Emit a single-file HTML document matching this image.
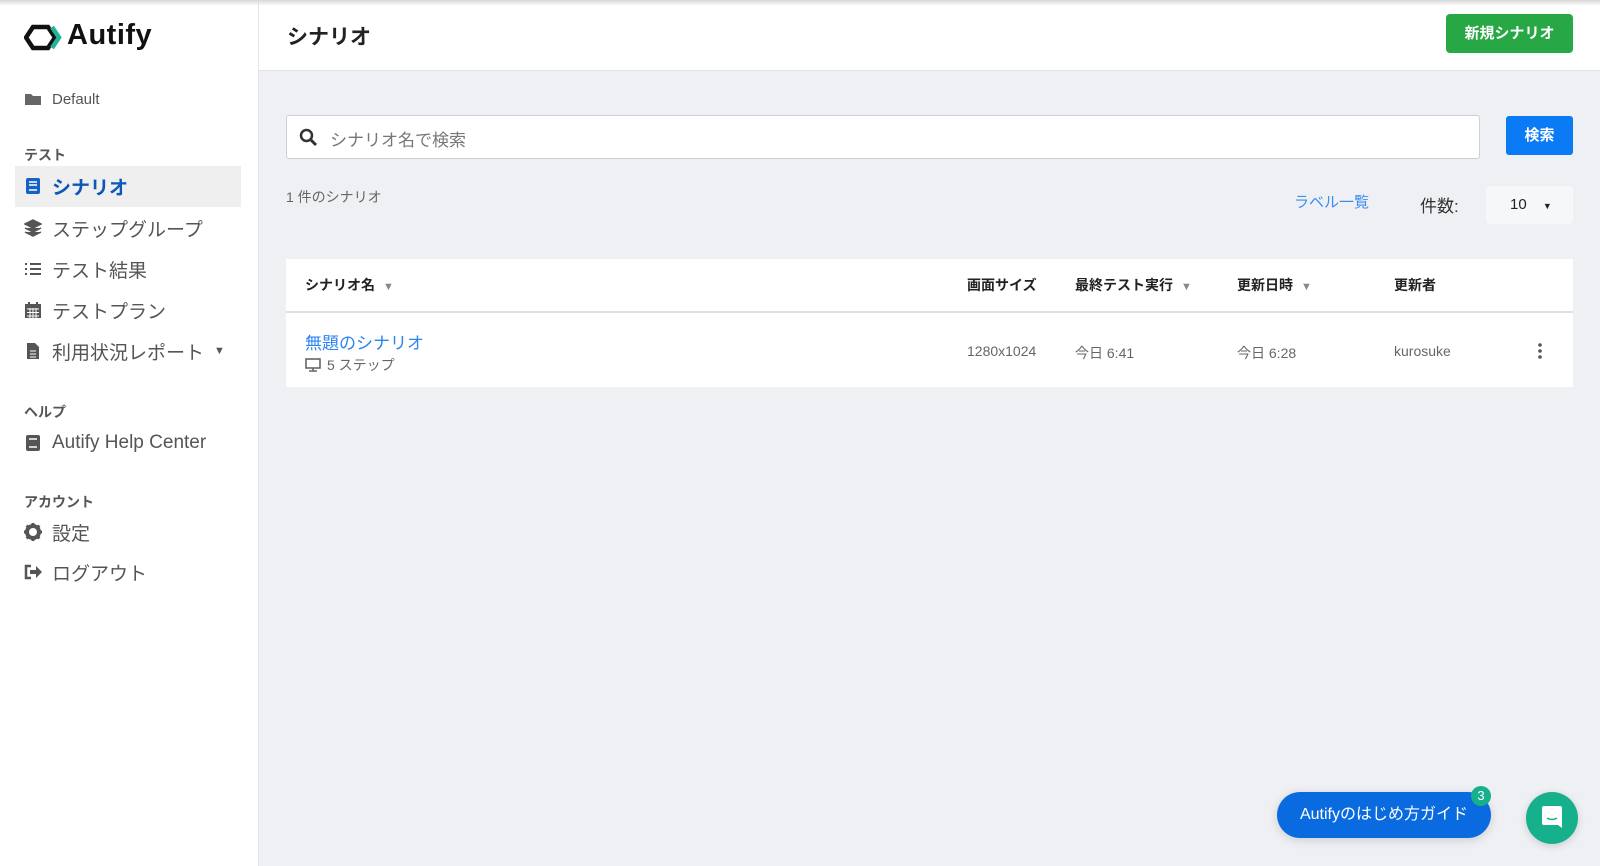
<!DOCTYPE html>
<html><head><meta charset="utf-8"><style>
*{box-sizing:border-box;margin:0;padding:0}
body{width:1600px;height:866px;overflow:hidden;background:#eff0f4;font-family:"Liberation Sans","Noto Sans CJK JP",sans-serif;position:relative;color:#333}
.abs{position:absolute}
#side{left:0;top:0;width:259px;height:866px;background:#fff;border-right:1px solid #e3e5ea}
#top{left:259px;top:0;width:1341px;height:71px;background:#fff;border-bottom:1px solid #dfe2e7}
.shadow{left:0;top:0;width:1600px;height:6px;background:linear-gradient(#d8d8d8,rgba(255,255,255,0))}
.lbl{left:24px;font-size:14px;color:#555;font-weight:bold}
.item{left:24px;font-size:19px;color:#555;display:flex;align-items:center;gap:10px;height:30px}
.ic{width:18px;height:18px;display:inline-block}
.th{top:259px;height:53px;line-height:53px;font-size:14px;font-weight:bold;color:#222}
.td{font-size:14px;color:#666}
.tri{color:#888;font-size:11px;margin-left:8px}
</style></head><body>
<div class="abs" id="side"></div>
<div class="abs" id="top"></div>
<div class="abs shadow"></div>

<!-- logo -->
<svg class="abs" style="left:24px;top:24px" width="40" height="27" viewBox="0 0 40 27">
<path d="M9 3 H24 L31 13.5 L24 24 H9 L2 13.5 Z" fill="none" stroke="#111" stroke-width="4.5" stroke-linejoin="miter"/>
<path d="M28 3 L35 13.5 L28 24" fill="none" stroke="#1fb597" stroke-width="4.5"/>
</svg>
<div class="abs" style="left:67px;top:19px;font-size:29px;font-weight:bold;color:#111;letter-spacing:0.5px">Autify</div>

<div class="abs item" style="top:84px;font-size:15px;color:#555"><svg class="ic" viewBox="0 0 18 18"><path d="M1 4h6l2 2h8v9H1z" fill="#666"/></svg>Default</div>
<div class="abs lbl" style="top:145px">テスト</div>
<div class="abs" style="left:15px;top:166px;width:226px;height:41px;background:#efefef"></div>
<div class="abs item" style="top:171px;color:#0d57b8;font-weight:bold"><svg class="ic" viewBox="0 0 18 18"><rect x="2" y="1" width="14" height="16" rx="2" fill="#1363c6"/><path d="M5 5h8M5 8h8M5 13h8" stroke="#fff" stroke-width="1.5"/></svg>シナリオ</div>
<div class="abs item" style="top:213px"><svg class="ic" viewBox="0 0 18 18"><path d="M9 1l8 4-8 4-8-4z M1 9l8 4 8-4 M1 13l8 4 8-4" fill="#555" stroke="#555" stroke-width="1.5"/></svg>ステップグループ</div>
<div class="abs item" style="top:254px"><svg class="ic" viewBox="0 0 18 18"><path d="M6 4h11M6 9h11M6 14h11M1 4h2M1 9h2M1 14h2" stroke="#555" stroke-width="2"/></svg>テスト結果</div>
<div class="abs item" style="top:295px"><svg class="ic" viewBox="0 0 18 18"><rect x="1" y="3" width="16" height="14" fill="#555"/><path d="M5 1v4M13 1v4" stroke="#555" stroke-width="2"/><path d="M3 8h12M3 11.5h12M3 15h12M6 7v10M9 7v10M12 7v10" stroke="#fff" stroke-width="1"/></svg>テストプラン</div>
<div class="abs item" style="top:336px"><svg class="ic" viewBox="0 0 18 18"><path d="M3 1h8l4 4v12H3z" fill="#555"/><path d="M6 9h6M6 12h6M6 15h6" stroke="#fff" stroke-width="1"/></svg>利用状況レポート <span style="font-size:11px">▼</span></div>
<div class="abs lbl" style="top:402px">ヘルプ</div>
<div class="abs item" style="top:428px"><svg class="ic" viewBox="0 0 18 18"><rect x="2" y="1" width="14" height="16" rx="2" fill="#555"/><path d="M5 5h8M5 13h8" stroke="#fff" stroke-width="1.5"/></svg>Autify Help Center</div>
<div class="abs lbl" style="top:492px">アカウント</div>
<div class="abs item" style="top:517px"><svg class="ic" viewBox="0 0 18 18"><circle cx="9" cy="9" r="6" fill="none" stroke="#555" stroke-width="4"/><path d="M9 0v4M9 14v4M0 9h4M14 9h4M2.6 2.6l3 3M12.4 12.4l3 3M2.6 15.4l3-3M12.4 5.6l3-3" stroke="#555" stroke-width="3"/></svg>設定</div>
<div class="abs item" style="top:557px"><svg class="ic" viewBox="0 0 18 18"><path d="M7 3H2v12h5" fill="none" stroke="#555" stroke-width="2.5"/><path d="M6 7h6V3l6 6-6 6v-4H6z" fill="#555"/></svg>ログアウト</div>

<!-- header -->
<div class="abs" style="left:287px;top:21px;font-size:21px;font-weight:bold;color:#222">シナリオ</div>
<div class="abs" style="left:1446px;top:14px;width:127px;height:39px;background:#28a745;border-radius:4px;color:#fff;font-weight:bold;font-size:15px;text-align:center;line-height:39px">新規シナリオ</div>

<!-- search -->
<div class="abs" style="left:286px;top:115px;width:1194px;height:44px;background:#fff;border:1px solid #ccd0d6;border-radius:3px"></div>
<svg class="abs" style="left:299px;top:128px" width="19" height="19" viewBox="0 0 19 19"><circle cx="7.5" cy="7.5" r="5.5" fill="none" stroke="#333" stroke-width="2.5"/><path d="M11.5 11.5l5.5 5.5" stroke="#333" stroke-width="3"/></svg>
<div class="abs" style="left:330px;top:126px;font-size:17px;color:#777">シナリオ名で検索</div>
<div class="abs" style="left:1506px;top:116px;width:67px;height:39px;background:#0a7bf5;border-radius:3px;color:#fff;font-weight:bold;font-size:15px;text-align:center;line-height:39px">検索</div>

<div class="abs" style="left:286px;top:187px;font-size:14px;color:#666">1 件のシナリオ</div>
<div class="abs" style="left:1294px;top:191px;font-size:15px;color:#3b8ef0">ラベル一覧</div>
<div class="abs" style="left:1420px;top:192px;font-size:17px;color:#333">件数:</div>
<div class="abs" style="left:1486px;top:186px;width:87px;height:38px;background:#f6f7f9;border-radius:4px;font-size:15px;color:#222;line-height:38px;padding-left:24px">10 <span style="font-size:9px;margin-left:12px">▼</span></div>

<!-- table -->
<div class="abs" style="left:286px;top:259px;width:1287px;height:128px;background:#fff"></div>
<div class="abs" style="left:286px;top:311px;width:1287px;height:2px;background:#dde1e6"></div>
<div class="abs th" style="left:305px">シナリオ名<span class="tri">▼</span></div>
<div class="abs th" style="left:967px">画面サイズ</div>
<div class="abs th" style="left:1075px">最終テスト実行<span class="tri">▼</span></div>
<div class="abs th" style="left:1237px">更新日時<span class="tri">▼</span></div>
<div class="abs th" style="left:1394px">更新者</div>

<div class="abs" style="left:305px;top:329px;font-size:17px;color:#2a85f2">無題のシナリオ</div>
<div class="abs td" style="left:305px;top:355px;display:flex;align-items:center;gap:6px"><svg width="16" height="14" viewBox="0 0 16 14"><rect x="1" y="1" width="14" height="9" fill="none" stroke="#666" stroke-width="1.6"/><path d="M8 10v3M4 13h8" stroke="#666" stroke-width="1.6"/></svg>5 ステップ</div>
<div class="abs td" style="left:967px;top:343px">1280x1024</div>
<div class="abs td" style="left:1075px;top:343px">今日 6:41</div>
<div class="abs td" style="left:1237px;top:343px">今日 6:28</div>
<div class="abs td" style="left:1394px;top:343px">kurosuke</div>
<svg class="abs" style="left:1537px;top:343px" width="6" height="16" viewBox="0 0 6 16"><circle cx="3" cy="2" r="1.8" fill="#555"/><circle cx="3" cy="8" r="1.8" fill="#555"/><circle cx="3" cy="14" r="1.8" fill="#555"/></svg>

<!-- floating -->
<div class="abs" style="left:1277px;top:792px;width:214px;height:46px;background:#0a6be0;border-radius:23px;color:#fff;font-size:16px;text-align:center;line-height:46px;box-shadow:0 2px 10px rgba(0,0,0,.15)">Autifyのはじめ方ガイド</div>
<div class="abs" style="left:1471px;top:786px;width:20px;height:20px;border-radius:50%;background:#16b08c;color:#fff;font-size:13px;text-align:center;line-height:20px">3</div>
<div class="abs" style="left:1526px;top:792px;width:52px;height:52px;border-radius:50%;background:#16b08c;box-shadow:0 2px 8px rgba(0,0,0,.15)"></div>
<svg class="abs" style="left:1540px;top:805px" width="24" height="26" viewBox="0 0 24 26"><path d="M2 3a2 2 0 012-2h16a2 2 0 012 2v20l-4-3H4a2 2 0 01-2-2z" fill="#fff"/><path d="M7 13q5 3 10 0" stroke="#16b08c" stroke-width="1.6" fill="none"/></svg>
</body></html>
